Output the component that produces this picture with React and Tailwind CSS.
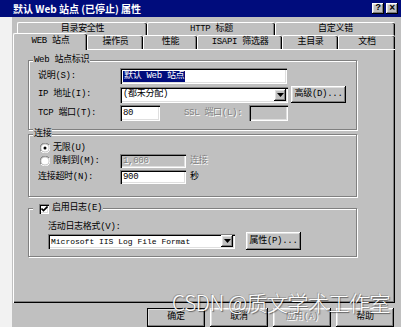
import React from "react";

const raised =
  "bg-[#c0c0c0] shadow-[inset_-1px_-1px_0_#000,inset_1px_1px_0_#fff,inset_-2px_-2px_0_#808080,inset_2px_2px_0_#dfdfdf]";
const sunken =
  "shadow-[inset_1px_1px_0_#808080,inset_2px_2px_0_#000,inset_-1px_-1px_0_#fff,inset_-2px_-2px_0_#dfdfdf]";
const etched = "border border-[#808080] shadow-[inset_1px_1px_0_#fff,1px_1px_0_#fff]";
const dis = "text-[#808080] [text-shadow:1px_1px_0_#fff]";

function Group({ label, className = "", children }) {
  return (
    <div className={`relative box-border w-[329px] ${etched} ${className}`}>
      <div className="absolute -top-[6px] left-[4px] flex items-center bg-[#c0c0c0] px-[1px] leading-[11px] h-[11px]">
        {label}
      </div>
      {children}
    </div>
  );
}

function Tab({ w, sel, children, className = "" }) {
  const base =
    "flex items-center justify-center border-t border-l border-white rounded-t-[2px] bg-[#c0c0c0] shadow-[inset_-1px_0_0_#000,inset_-2px_0_0_#808080]";
  return (
    <div
      className={`${base} ${sel ? "relative z-10 h-[17px] -mb-[1px] pb-[2px]" : "h-[14px]"} ${className}`}
      style={{ width: w }}
    >
      {children}
    </div>
  );
}

function Btn({ w, h = 17, children, className = "" }) {
  return (
    <div
      className={`flex items-center justify-center ${raised} ${className}`}
      style={{ width: w, height: h }}
    >
      {children}
    </div>
  );
}

function Arrow() {
  return (
    <div className={`w-[12px] h-[12px] flex items-center justify-center ${raised}`}>
      <svg width="7" height="4" viewBox="0 0 7 4">
        <path d="M0 0H7L3.5 4Z" fill="#000" />
      </svg>
    </div>
  );
}

function Radio({ checked }) {
  return (
    <svg width="10" height="10" viewBox="0 0 10 10" className="shrink-0">
      <path d="M9 2A4.5 4.5 0 0 0 1 8" stroke="#808080" fill="none" />
      <path d="M1 8A4.5 4.5 0 0 0 9 2" stroke="#fff" fill="none" />
      <circle cx="5" cy="5" r="3.6" fill="#fff" />
      {checked && <circle cx="5" cy="5" r="1.5" fill="#000" />}
    </svg>
  );
}

function Check() {
  return (
    <div className={`w-[10px] h-[10px] bg-white flex items-center justify-center ${sunken}`}>
      <svg width="7" height="6" viewBox="0 0 7 6">
        <path d="M0.5 2.5L2.5 4.5L6.5 0.5" stroke="#000" strokeWidth="1.6" fill="none" />
      </svg>
    </div>
  );
}

export default function App() {
  return (
    <div
      className="relative w-[401px] h-[327px] overflow-hidden bg-[#c0c0c0] text-black text-[9px] leading-[11px] tracking-[-0.3px]"
      style={{ fontFamily: '"Liberation Mono", "Noto Sans CJK SC", monospace' }}
    >
      {/* title bar */}
      <div className="h-[17px] bg-[#000c7c] flex items-center justify-between pl-[13px] pr-[3px]">
        <div
          className="text-white text-[10px] font-bold leading-[12px] tracking-normal"
          style={{ fontFamily: '"Noto Sans CJK SC", sans-serif' }}
        >
          默认 Web 站点 (已停止) 属性
        </div>
        <div className="flex gap-[2px]">
          <Btn w={12} h={11} className="text-[9px] font-bold">?</Btn>
          <Btn w={12} h={11} className="text-[10px] font-bold">×</Btn>
        </div>
      </div>

      <div className="flex h-[310px]">
        <div className="w-[12px] bg-[#f2f2f2]" />
        <div className="flex-1 flex flex-col">
          {/* tab row 1 */}
          <div className="flex ml-[5px] mt-[5px] h-[13px]">
            <Tab w={130} className="h-[13px]">目录安全性</Tab>
            <Tab w={128} className="h-[13px]">HTTP 标题</Tab>
            <Tab w={120} className="h-[13px]">自定义错</Tab>
          </div>
          {/* tab row 2 */}
          <div className="flex items-end ml-[1px] -mt-[2px] h-[16px]">
            <Tab w={74} sel>WEB 站点</Tab>
            <Tab w={56}>操作员</Tab>
            <Tab w={54}>性能</Tab>
            <Tab w={85}>ISAPI 筛选器</Tab>
            <Tab w={56}>主目录</Tab>
            <Tab w={57}>文档</Tab>
          </div>

          {/* panel */}
          <div className="ml-[1px] w-[382px] h-[254px] pl-[15px] pt-[11px] shadow-[inset_1px_1px_0_#fff,inset_-1px_-1px_0_#000,inset_-2px_-2px_0_#808080]">
            <Group label="Web 站点标识" className="h-[70px] pt-[7px] pl-[9px]">
              <div className="flex items-center h-[16px]">
                <div className="w-[82px]">说明(S):</div>
                <div className={`w-[167px] h-[16px] bg-white flex items-center pl-[3px] ${sunken}`}>
                  <span className="bg-[#000c7c] text-white px-[1px]">默认 Web 站点</span>
                </div>
              </div>
              <div className="flex items-center h-[17px] mt-[2px]">
                <div className="w-[82px]">IP 地址(I):</div>
                <div className={`w-[168px] h-[16px] bg-white flex items-center p-[2px] ${sunken}`}>
                  <div className="flex-1 pl-[1px]">(都未分配)</div>
                  <Arrow />
                </div>
                <Btn w={55} className="ml-[3px]">高级(D)...</Btn>
              </div>
              <div className="flex items-center h-[16px] mt-[2px]">
                <div className="w-[82px]">TCP 端口(T):</div>
                <div className={`w-[40px] h-[16px] bg-white flex items-center pl-[3px] ${sunken}`}>80</div>
                <div className={`ml-[24px] w-[65px] ${dis}`}>SSL 端口(L):</div>
                <div className={`w-[39px] h-[16px] ${sunken}`} />
              </div>
            </Group>

            <Group label="连接" className="mt-[4px] h-[63px] pt-[7px] pl-[9px]">
              <div className="flex items-center h-[12px] pl-[2px] gap-[3px]">
                <Radio checked />
                <span>无限(U)</span>
              </div>
              <div className="flex items-center h-[14px]">
                <div className="w-[82px] flex items-center pl-[2px] gap-[3px]">
                  <Radio />
                  <span>限制到(M):</span>
                </div>
                <div className={`w-[66px] h-[14px] flex items-center pl-[3px] ${sunken} ${dis}`}>1,000</div>
                <div className={`ml-[4px] ${dis}`}>连接</div>
              </div>
              <div className="flex items-center h-[14px] mt-[2px]">
                <div className="w-[82px]">连接超时(N):</div>
                <div className={`w-[66px] h-[14px] bg-white flex items-center pl-[3px] ${sunken}`}>900</div>
                <div className="ml-[4px]">秒</div>
              </div>
            </Group>

            <Group
              label={
                <span className="flex items-center gap-[3px] pl-[5px]">
                  <Check />
                  <span>启用日志(E)</span>
                </span>
              }
              className="mt-[11px] h-[49px] pt-[12px] pl-[19px]"
            >
              <div className="h-[12px] flex items-center">活动日志格式(V):</div>
              <div className="flex items-center h-[18px] -mt-[1px]">
                <div className={`w-[187px] h-[15px] bg-white flex items-center p-[2px] ${sunken}`}>
                  <div className="flex-1 pl-[1px] text-[8px] tracking-normal">Microsoft IIS Log File Format</div>
                  <Arrow />
                </div>
                <Btn w={55} h={18} className="ml-[11px]">属性(P)...</Btn>
              </div>
            </Group>
          </div>

          {/* bottom buttons */}
          <div className="flex gap-[5px] mt-[5px] ml-[135px]">
            <Btn w={58} h={19} className="outline outline-1 outline-black -outline-offset-1">确定</Btn>
            <Btn w={58} h={19}>取消</Btn>
            <Btn w={58} h={19}><span className={dis}>应用(A)</span></Btn>
            <Btn w={58} h={19}>帮助</Btn>
          </div>
        </div>
      </div>

      {/* watermark */}
      <div
        className="absolute left-[172px] top-[292px] text-[21px] leading-none font-light text-white whitespace-nowrap tracking-[-0.5px] [text-shadow:1px_1px_1px_rgba(0,0,0,0.5),-1px_-1px_0_rgba(80,80,80,0.3)]"
        style={{ fontFamily: '"Noto Sans CJK SC", sans-serif' }}
      >
        CSDN @质文学术工作室
      </div>
    </div>
  );
}
